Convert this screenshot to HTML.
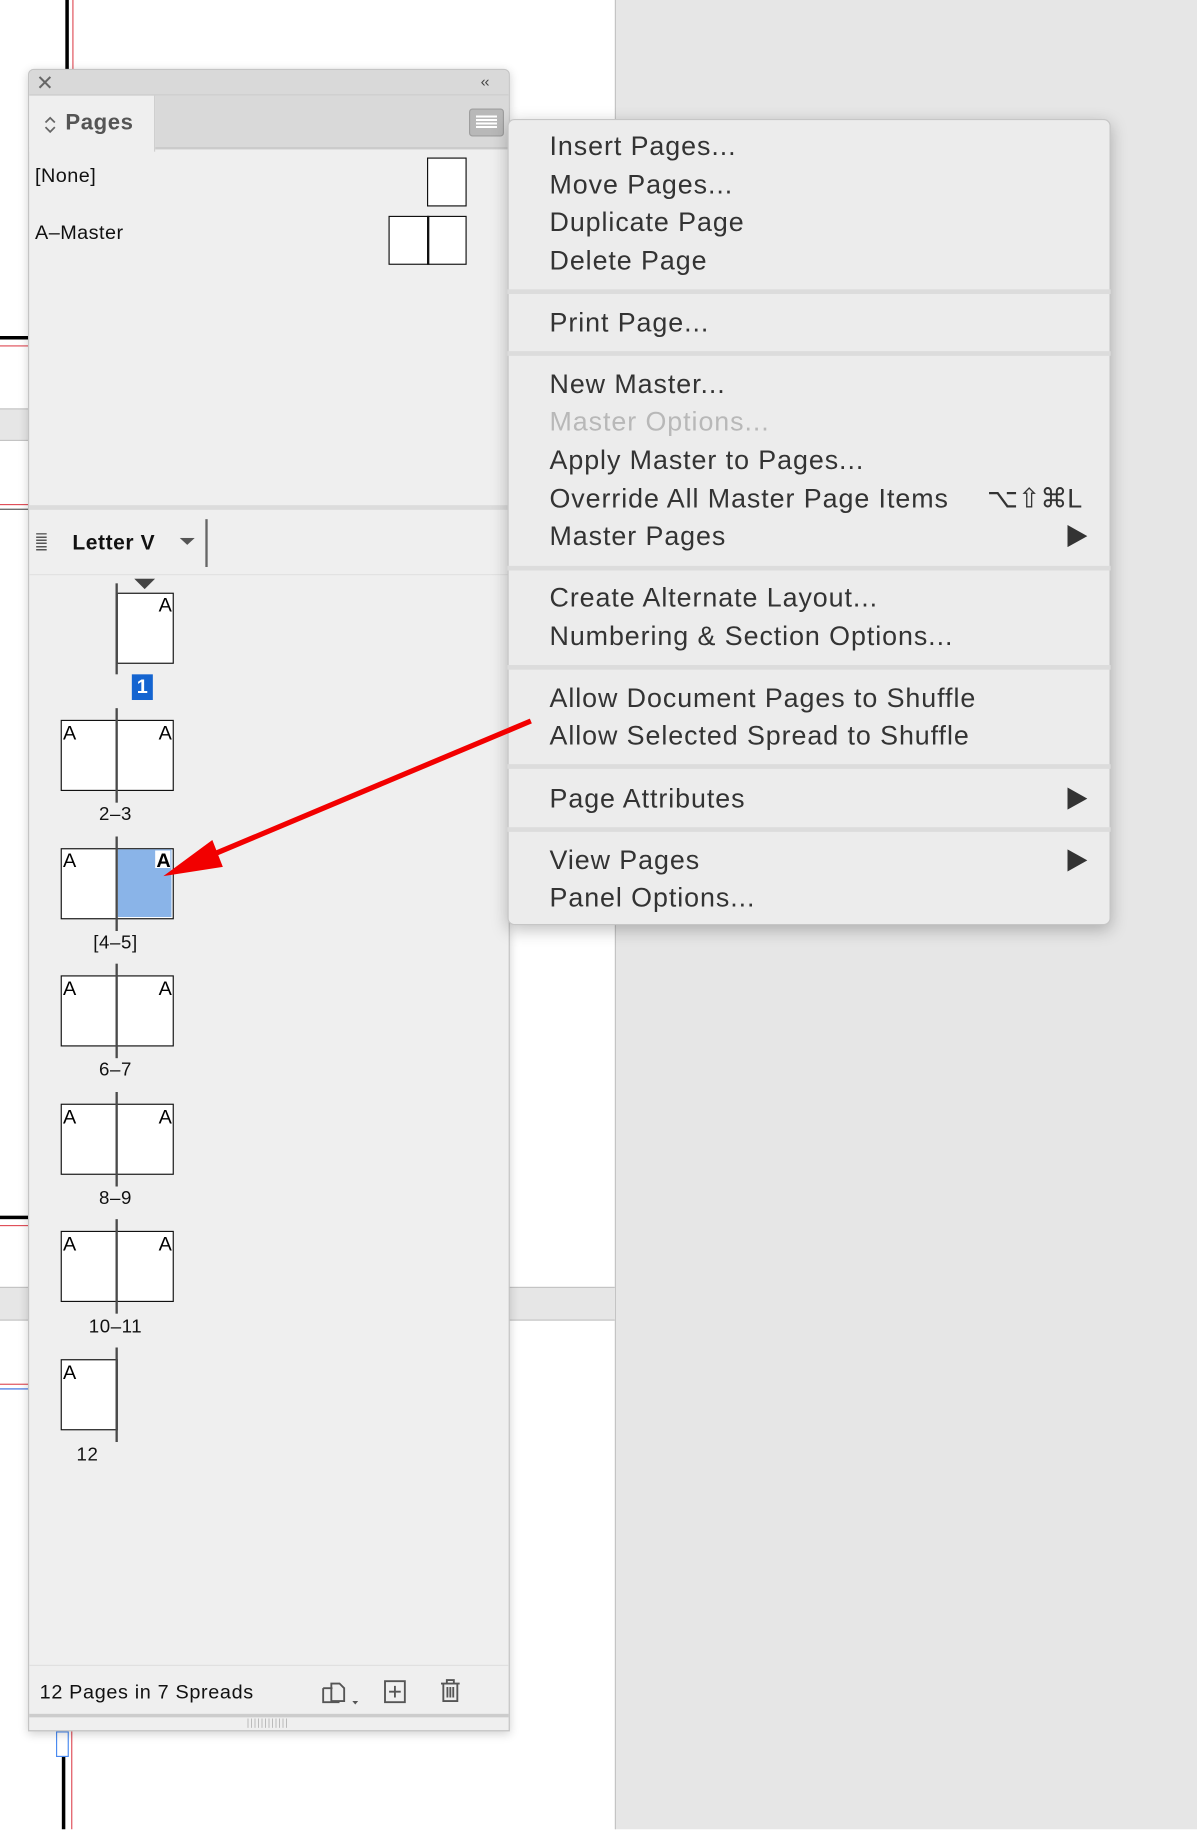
<!DOCTYPE html>
<html><head><meta charset="utf-8">
<style>
html,body{margin:0;padding:0;}
body{width:1197px;height:1830px;overflow:hidden;background:#fff;font-family:"Liberation Sans",Arial,sans-serif;}
#w{position:absolute;left:0;top:0;width:1026px;height:1568px;transform:scale(1.16667);transform-origin:0 0;overflow:hidden;background:#fff;}
.a{position:absolute;}
.t{position:absolute;white-space:nowrap;}
.pg{position:absolute;background:#fff;border:1.5px solid #111;box-sizing:border-box;}
.sp{position:absolute;width:2px;background:#4a4a4a;}
.A{position:absolute;font-size:17px;color:#000;line-height:17px;}
.lbl{position:absolute;font-size:16px;color:#111;width:100px;text-align:center;line-height:18px;letter-spacing:0.5px;}
.mi{position:absolute;left:471px;font-size:23px;color:#333;line-height:30px;white-space:nowrap;letter-spacing:0.8px;}
.sep{position:absolute;left:435px;width:517px;height:4px;background:#dcdcdc;}
</style></head><body>
<div id="w">
<div class="a" style="left:527px;top:0;width:499px;height:1568px;background:#e6e6e6;border-left:1px solid #c4c4c4;"></div>
<div class="a" style="left:0;top:1103px;width:527px;height:27px;background:#e6e6e6;border-top:1px solid #c4c4c4;border-bottom:1px solid #c4c4c4;"></div>
<div class="a" style="left:0;top:350px;width:24px;height:26px;background:#e6e6e6;border-top:1px solid #c4c4c4;border-bottom:1px solid #c4c4c4;"></div>
<div class="a" style="left:56px;top:0;width:3px;height:60px;background:#000;"></div>
<div class="a" style="left:62px;top:0;width:1px;height:60px;background:#e0505a;"></div>
<div class="a" style="left:0;top:288px;width:24px;height:3px;background:#000;"></div>
<div class="a" style="left:0;top:296px;width:24px;height:1px;background:#e0505a;"></div>
<div class="a" style="left:0;top:432px;width:24px;height:1px;background:#e0505a;"></div>
<div class="a" style="left:0;top:436px;width:24px;height:1px;background:#555;"></div>
<div class="a" style="left:0;top:1042px;width:24px;height:3px;background:#000;"></div>
<div class="a" style="left:0;top:1050px;width:24px;height:1px;background:#e0505a;"></div>
<div class="a" style="left:0;top:1186px;width:24px;height:1px;background:#e0505a;"></div>
<div class="a" style="left:0;top:1190px;width:24px;height:1px;background:#3a6ee0;"></div>
<div class="a" style="left:48px;top:1484px;width:11px;height:22px;border:1px solid #4a8af0;box-sizing:border-box;background:#fff;"></div>
<div class="a" style="left:53px;top:1506px;width:3px;height:62px;background:#000;"></div>
<div class="a" style="left:61px;top:1484px;width:1px;height:84px;background:#e0505a;"></div>

<div class="a" style="left:24px;top:59px;width:413px;height:1425px;background:#efefef;border:1px solid #c4c4c4;box-sizing:border-box;border-radius:5px 5px 0 0;box-shadow:0 2px 8px rgba(0,0,0,.18);"></div>
<div class="a" style="left:25px;top:60px;width:411px;height:21px;background:#d9d9d9;border-radius:4px 4px 0 0;border-bottom:1px solid #c8c8c8;"></div>
<div class="t" style="left:31px;top:60px;font-size:18px;color:#666;line-height:22px;">✕</div>
<div class="t" style="left:412px;top:60px;font-size:13px;color:#444;line-height:20px;letter-spacing:-1px;">‹‹</div>
<div class="a" style="left:25px;top:82px;width:411px;height:46px;background:#d9d9d9;border-bottom:2px solid #cbcbcb;box-sizing:border-box;"></div>
<div class="a" style="left:25px;top:82px;width:107px;height:48px;background:#efefef;border-right:1px solid #cfcfcf;"></div>
<svg class="a" style="left:37px;top:99px" width="12" height="16"><path d="M2 6 L6 2 L10 6 M2 10 L6 14 L10 10" fill="none" stroke="#666" stroke-width="1.5"/></svg>
<div class="t" style="left:56px;top:94px;font-size:19px;font-weight:bold;color:#555;line-height:24px;letter-spacing:0.5px;">Pages</div>
<div class="a" style="left:402px;top:93px;width:30px;height:24px;background:#b8b8b8;border:1px solid #9e9e9e;border-radius:3px;box-sizing:border-box;"></div>
<div class="a" style="left:408px;top:99px;width:18px;height:11px;background:repeating-linear-gradient(#fff 0 1.5px,transparent 1.5px 3px);"></div>

<div class="t" style="left:30px;top:141px;font-size:17px;color:#111;line-height:20px;letter-spacing:0.4px;">[None]</div>
<div class="pg" style="left:366px;top:135px;width:34px;height:42px;"></div>
<div class="t" style="left:30px;top:190px;font-size:17px;color:#111;line-height:20px;letter-spacing:0.4px;">A–Master</div>
<div class="pg" style="left:333px;top:185px;width:67px;height:42px;"></div>
<div class="a" style="left:366px;top:185px;width:1.5px;height:42px;background:#111;"></div>

<div class="a" style="left:25px;top:433px;width:411px;height:4px;background:#dcdcdc;"></div>
<div class="a" style="left:31px;top:457px;width:9px;height:16px;background:repeating-linear-gradient(#555 0 1.3px,transparent 1.3px 2.7px);"></div>
<div class="t" style="left:62px;top:454px;font-size:18px;font-weight:bold;color:#111;line-height:22px;letter-spacing:0.5px;">Letter V</div>
<svg class="a" style="left:154px;top:461px" width="13" height="8"><path d="M0 0 L13 0 L6.5 6Z" fill="#555"/></svg>
<div class="a" style="left:176px;top:445px;width:2px;height:41px;background:#666;"></div>
<div class="a" style="left:25px;top:492px;width:411px;height:1px;background:#e2e2e2;"></div>

<svg class="a" style="left:115px;top:496px" width="18" height="10"><path d="M0 0 L18 0 L9 9Z" fill="#444"/></svg>
<div class="pg" style="left:100px;top:508px;width:49px;height:61px;"></div>
<div class="sp" style="left:99px;top:500px;height:78px;"></div>
<div class="A" style="left:136px;top:510px;">A</div>
<div class="a" style="left:113px;top:578px;width:18px;height:22px;background:#1464d0;color:#fff;font-size:17px;font-weight:bold;text-align:center;line-height:22px;">1</div>

<div class="pg" style="left:52px;top:617px;width:97px;height:61px;"></div><div class="sp" style="left:99px;top:607px;height:81px;"></div>
<div class="A" style="left:54px;top:620px;">A</div><div class="A" style="left:136px;top:620px;">A</div>
<div class="lbl" style="left:49px;top:690px;">2–3</div>

<div class="pg" style="left:52px;top:727px;width:97px;height:61px;"></div>
<div class="a" style="left:101px;top:728px;width:46px;height:58px;background:#8ab4e8;"></div>
<div class="a" style="left:133px;top:729px;width:13px;height:15px;background:#fff;"></div>
<div class="sp" style="left:99px;top:717px;height:81px;"></div>
<div class="A" style="left:54px;top:729px;">A</div><div class="A" style="left:134px;top:729px;font-weight:bold;">A</div>
<div class="lbl" style="left:49px;top:800px;">[4–5]</div>

<div class="pg" style="left:52px;top:836px;width:97px;height:61px;"></div><div class="sp" style="left:99px;top:826px;height:81px;"></div>
<div class="A" style="left:54px;top:839px;">A</div><div class="A" style="left:136px;top:839px;">A</div>
<div class="lbl" style="left:49px;top:909px;">6–7</div>

<div class="pg" style="left:52px;top:946px;width:97px;height:61px;"></div><div class="sp" style="left:99px;top:936px;height:81px;"></div>
<div class="A" style="left:54px;top:949px;">A</div><div class="A" style="left:136px;top:949px;">A</div>
<div class="lbl" style="left:49px;top:1019px;">8–9</div>

<div class="pg" style="left:52px;top:1055px;width:97px;height:61px;"></div><div class="sp" style="left:99px;top:1045px;height:81px;"></div>
<div class="A" style="left:54px;top:1058px;">A</div><div class="A" style="left:136px;top:1058px;">A</div>
<div class="lbl" style="left:49px;top:1129px;">10–11</div>

<div class="pg" style="left:52px;top:1165px;width:49px;height:61px;"></div><div class="sp" style="left:99px;top:1155px;height:81px;"></div>
<div class="A" style="left:54px;top:1168px;">A</div>
<div class="lbl" style="left:25px;top:1239px;">12</div>

<div class="a" style="left:25px;top:1427px;width:411px;height:1px;background:#e0e0e0;"></div>
<div class="t" style="left:34px;top:1441px;font-size:17px;color:#111;line-height:20px;letter-spacing:0.55px;">12 Pages in 7 Spreads</div>
<svg class="a" style="left:274px;top:1438px" width="36" height="26"><path d="M10 5 H17 L21 9 V20 H10Z M3 9 H11 M3 9 V21 H17" fill="none" stroke="#555" stroke-width="1.6"/><path d="M28 20 L33 20 L30.5 23Z" fill="#555"/></svg>
<svg class="a" style="left:328px;top:1439px" width="22" height="22"><rect x="2" y="2" width="17" height="18" fill="none" stroke="#555" stroke-width="1.6"/><path d="M10.5 6 V16 M5.5 11 H15.5" stroke="#555" stroke-width="1.6"/></svg>
<svg class="a" style="left:374px;top:1437px" width="24" height="24"><path d="M4 6 H20 M9 6 V3 H15 V6 M6 6 V21 H18 V6 M9.5 9 V18 M12 9 V18 M14.5 9 V18" fill="none" stroke="#555" stroke-width="1.6"/></svg>
<div class="a" style="left:25px;top:1469px;width:411px;height:3px;background:#cccccc;"></div>
<div class="a" style="left:212px;top:1473px;width:34px;height:8px;background:repeating-linear-gradient(90deg,#bbb 0 1px,transparent 1px 3px);"></div>

<div class="a" style="left:435px;top:102px;width:517px;height:691px;background:#ececec;border:1px solid #c6c6c6;box-sizing:border-box;border-radius:6px;box-shadow:0 4px 14px rgba(0,0,0,.25);"></div>
<div class="mi" style="top:110px;">Insert Pages...</div>
<div class="mi" style="top:143px;">Move Pages...</div>
<div class="mi" style="top:175px;">Duplicate Page</div>
<div class="mi" style="top:208px;">Delete Page</div>
<div class="sep" style="top:248px;"></div>
<div class="mi" style="top:261px;">Print Page...</div>
<div class="sep" style="top:301px;"></div>
<div class="mi" style="top:314px;">New Master...</div>
<div class="mi" style="top:346px;color:#b8b8b8;">Master Options...</div>
<div class="mi" style="top:379px;">Apply Master to Pages...</div>
<div class="mi" style="top:412px;">Override All Master Page Items</div>
<div class="mi" style="top:412px;left:846px;letter-spacing:0;">⌥⇧⌘L</div>
<div class="mi" style="top:444px;">Master Pages</div>
<svg class="a" style="left:915px;top:450px" width="17" height="19"><path d="M0 0 L17 9.5 L0 19Z" fill="#333"/></svg>
<div class="sep" style="top:485px;"></div>
<div class="mi" style="top:497px;">Create Alternate Layout...</div>
<div class="mi" style="top:530px;">Numbering &amp; Section Options...</div>
<div class="sep" style="top:570px;"></div>
<div class="mi" style="top:583px;">Allow Document Pages to Shuffle</div>
<div class="mi" style="top:615px;">Allow Selected Spread to Shuffle</div>
<div class="sep" style="top:655px;"></div>
<div class="mi" style="top:669px;">Page Attributes</div>
<svg class="a" style="left:915px;top:675px" width="17" height="19"><path d="M0 0 L17 9.5 L0 19Z" fill="#333"/></svg>
<div class="sep" style="top:709px;"></div>
<div class="mi" style="top:722px;">View Pages</div>
<svg class="a" style="left:915px;top:728px" width="17" height="19"><path d="M0 0 L17 9.5 L0 19Z" fill="#333"/></svg>
<div class="mi" style="top:754px;">Panel Options...</div>

<svg class="a" style="left:0;top:0" width="1026" height="1568"><path d="M455 618 L186 731" stroke="#f20000" stroke-width="4.5" fill="none"/><path d="M140 751 L182 720 L191 743Z" fill="#f20000"/></svg>
</div>
</body></html>
